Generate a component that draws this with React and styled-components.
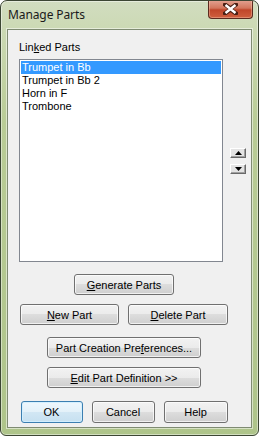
import React, { useState } from "react";
import styled, { createGlobalStyle, css } from "styled-components";

const GlobalStyle = createGlobalStyle`
  html, body {
    margin: 0;
    padding: 0;
    background: #ffffff;
  }
  #root {
    width: 259px;
    height: 436px;
  }
`;

const parts = ["Trumpet in Bb", "Trumpet in Bb 2", "Horn in F", "Trombone"];

const App = () => {
  const [selected, setSelected] = useState(0);

  return (
    <>
      <GlobalStyle />
      <Window>
        <TitleBar>
          <Title>Manage Parts</Title>
          <CloseButton aria-label="Close">
            <svg width="15" height="12" viewBox="0 0 15 12">
              <path
                d="M2 1.5 L7.5 5.5 L13 1.5 M2 10.5 L7.5 6.5 L13 10.5"
                stroke="#4a1f14"
                strokeWidth="4.2"
                fill="none"
                strokeLinecap="square"
              />
              <path
                d="M2.5 2 L12.5 10 M12.5 2 L2.5 10"
                stroke="#ffffff"
                strokeWidth="2.4"
                fill="none"
              />
            </svg>
          </CloseButton>
        </TitleBar>
        <Client>
          <Label>
            Lin<u>k</u>ed Parts
          </Label>
          <ListRow>
            <ListBox>
              {parts.map((name, i) => (
                <ListItem
                  key={name}
                  $selected={i === selected}
                  onClick={() => setSelected(i)}
                >
                  {name}
                </ListItem>
              ))}
            </ListBox>
            <Arrows>
              <ArrowButton aria-label="Move up">
                <svg width="7" height="4" viewBox="0 0 7 4">
                  <path d="M3.5 0 L7 4 L0 4 Z" fill="#000" />
                </svg>
              </ArrowButton>
              <ArrowButton aria-label="Move down">
                <svg width="7" height="4" viewBox="0 0 7 4">
                  <path d="M0 0 L7 0 L3.5 4 Z" fill="#000" />
                </svg>
              </ArrowButton>
            </Arrows>
          </ListRow>
          <Buttons>
            <Row $gap={12}>
              <Button $w={100}>
                <u>G</u>enerate Parts
              </Button>
            </Row>
            <Row $gap={9}>
              <Button $w={99}>
                <u>N</u>ew Part
              </Button>
              <Button $w={100}>
                <u>D</u>elete Part
              </Button>
            </Row>
            <Row $gap={12}>
              <Button $w={154}>
                Part Creation Pre<u>f</u>erences...
              </Button>
            </Row>
            <Row $gap={9}>
              <Button $w={154}>
                <u>E</u>dit Part Definition &gt;&gt;
              </Button>
            </Row>
            <Row $gap={13} $spacing={9}>
              <Button $w={62} $h={22} $default>
                OK
              </Button>
              <Button $w={63} $h={22}>
                Cancel
              </Button>
              <Button $w={64} $h={22}>
                Help
              </Button>
            </Row>
          </Buttons>
        </Client>
      </Window>
    </>
  );
};

const Window = styled.div`
  box-sizing: border-box;
  width: 259px;
  height: 436px;
  border: 1px solid #3c4633;
  border-radius: 7px 7px 6px 6px;
  background: linear-gradient(
    180deg,
    #d2ddc0 0px,
    #cbd9b3 30px,
    #b9cc96 120px,
    #aec48a 436px
  );
  box-shadow: inset 0 0 0 1px rgba(255, 255, 255, 0.45);
  display: flex;
  flex-direction: column;
  font-family: "Liberation Sans", Arial, sans-serif;
  font-size: 11px;
  color: #000;
  overflow: hidden;
`;

const TitleBar = styled.div`
  height: 28px;
  display: flex;
  align-items: flex-start;
  justify-content: space-between;
  padding-left: 7px;
  padding-right: 5px;
`;

const Title = styled.div`
  font-family: "Segoe UI", "Noto Sans", sans-serif;
  font-size: 12px;
  line-height: 16px;
  margin-top: 6px;
  color: #1a1a1a;
  letter-spacing: -0.1px;
`;

const CloseButton = styled.button`
  box-sizing: border-box;
  width: 45px;
  height: 19px;
  margin-top: -1px;
  padding: 0;
  border: 1px solid #5b2a1e;
  border-top: none;
  border-radius: 0 0 4px 4px;
  background: linear-gradient(
    180deg,
    #e4a493 0%,
    #d3765d 45%,
    #c0462a 55%,
    #cf5f3e 100%
  );
  box-shadow: inset 0 0 0 1px rgba(255, 220, 200, 0.35);
  display: flex;
  align-items: center;
  justify-content: center;
`;

const Client = styled.div`
  flex: 1;
  margin: 0 6px 7px 6px;
  border: 1px solid #7f8b72;
  box-shadow: 0 0 0 1px rgba(255, 255, 255, 0.5);
  background: #f0f0f0;
  padding: 11px 0 0 0;
  display: flex;
  flex-direction: column;
`;

const Label = styled.div`
  margin-left: 11px;
  line-height: 13px;
  height: 13px;
`;

const ListRow = styled.div`
  margin-top: 5px;
  margin-left: 11px;
  display: flex;
  align-items: center;
  gap: 7px;
`;

const ListBox = styled.div`
  box-sizing: border-box;
  width: 204px;
  height: 203px;
  border: 1px solid #828790;
  background: #ffffff;
  padding: 1px;
`;

const ListItem = styled.div`
  height: 13px;
  line-height: 13px;
  padding-left: 1px;
  white-space: nowrap;
  cursor: default;
  ${(p) =>
    p.$selected &&
    css`
      background: #3399ff;
      color: #ffffff;
    `}
`;

const Arrows = styled.div`
  display: flex;
  flex-direction: column;
  gap: 6px;
`;

const ArrowButton = styled.button`
  box-sizing: border-box;
  width: 16px;
  height: 10px;
  padding: 0;
  border: 1px solid;
  border-color: #ffffff #696969 #696969 #ffffff;
  background: #e3e3e3;
  box-shadow: inset -1px -1px 0 #a0a0a0;
  display: flex;
  align-items: center;
  justify-content: center;
`;

const Buttons = styled.div`
  margin-top: 0;
  padding-left: 12px;
  width: 208px;
  display: flex;
  flex-direction: column;
`;

const Row = styled.div`
  margin-top: ${(p) => p.$gap}px;
  display: flex;
  justify-content: center;
  gap: ${(p) => p.$spacing || 9}px;
`;

const Button = styled.button`
  box-sizing: border-box;
  width: ${(p) => p.$w}px;
  height: ${(p) => p.$h || 21}px;
  padding: 0;
  font-family: "Liberation Sans", Arial, sans-serif;
  font-size: 11px;
  color: #000;
  border: 1px solid #707070;
  border-radius: 3px;
  background: linear-gradient(
    180deg,
    #f2f2f2 0%,
    #ebebeb 50%,
    #dddddd 50%,
    #cfcfcf 100%
  );
  box-shadow: inset 0 0 0 1px rgba(255, 255, 255, 0.7);
  u {
    text-decoration-thickness: 1px;
    text-underline-offset: 1px;
  }
  ${(p) =>
    p.$default &&
    css`
      border-color: #3c7fb1;
      background: linear-gradient(
        180deg,
        #eef7fd 0%,
        #e3f1f9 50%,
        #d2e7f4 50%,
        #c6e0f0 100%
      );
      box-shadow: inset 0 0 0 1px rgba(210, 240, 255, 0.9);
    `}
`;

export default App;
